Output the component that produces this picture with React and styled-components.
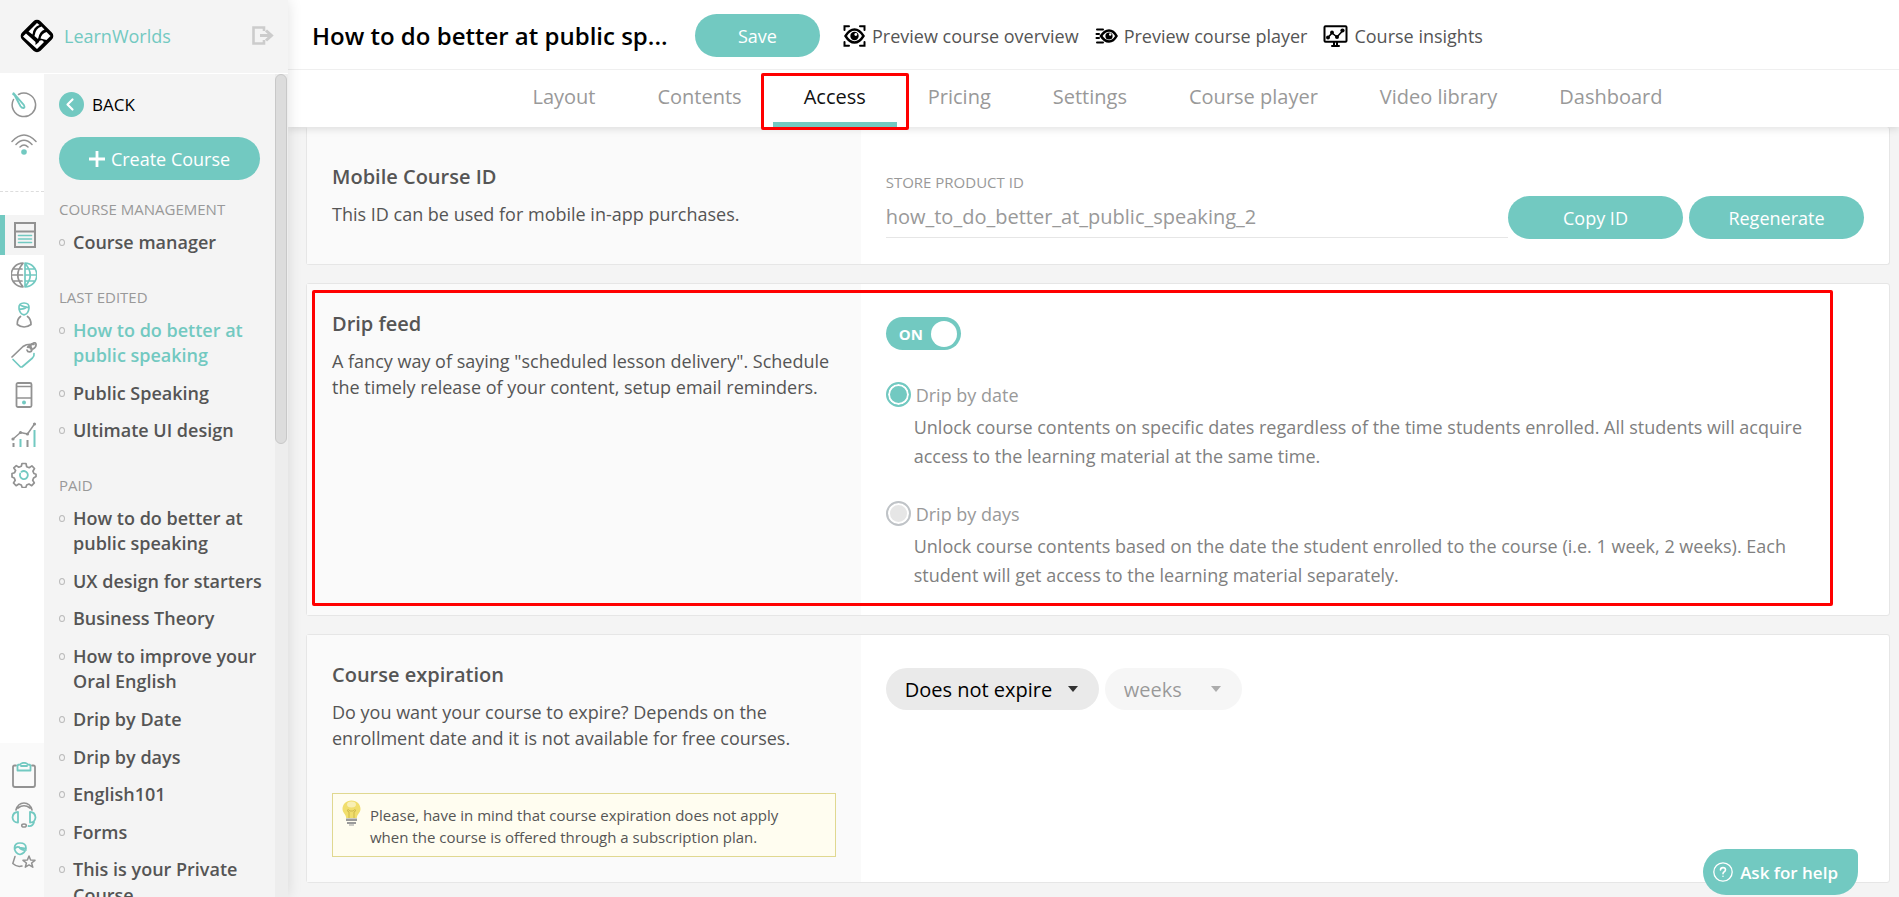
import React, { useState } from 'react';
import styled, { createGlobalStyle, ThemeProvider } from 'styled-components';

const theme = {
  colors: {
    teal: '#72c9c1',
    page: '#f4f4f4',
    panel: '#fafafa',
    border: '#e6e6e6',
    text: '#555555',
    muted: '#999999',
    icon: '#929292',
    mark: '#ff0000',
  },
  size: {
    note: '15px',
    body: '18px',
    tab: '20px',
    title: '24px',
  },
};

const GlobalStyle = createGlobalStyle`
  *, *::before, *::after {
    box-sizing: border-box;
  }

  body {
    margin: 0;
    font-family: 'Open Sans', 'Noto Sans', sans-serif;
    font-size: 18px;
    color: #555555;
  }

  h1, h2, h3, p, ul {
    margin: 0;
    padding: 0;
  }

  ul {
    list-style: none;
  }

  a {
    color: inherit;
    text-decoration: none;
  }

  button, input, select {
    font: inherit;
    color: inherit;
  }

  svg {
    display: block;
    flex: none;
  }
`;

const Shell = styled.div`
  display: flex;
  height: 100vh;
  overflow: hidden;
  background: ${({ theme }) => theme.colors.page};
`;

/* ---------- sidebar ---------- */

const Sidebar = styled.aside`
  display: flex;
  flex-direction: column;
  flex: none;
  width: 288px;
  z-index: 3;
  background: ${({ theme }) => theme.colors.page};
  box-shadow: 0 0 14px rgba(0, 0, 0, 0.12);
`;

const Brand = styled.div`
  display: flex;
  align-items: center;
  gap: 9px;
  height: 74px;
  flex: none;
  padding: 0 14px 2px 19px;
  border-bottom: 1px solid #ffffff;
`;

const BrandName = styled.a`
  flex: 1;
  color: ${({ theme }) => theme.colors.teal};
`;

const IconButton = styled.button`
  padding: 0;
  border: 0;
  background: none;
  cursor: pointer;
`;

const SidebarBody = styled.div`
  display: flex;
  flex: 1;
  min-height: 0;
`;

const Rail = styled.nav`
  display: flex;
  flex-direction: column;
  justify-content: space-between;
  width: 44px;
  flex: none;
  background: #ffffff;
`;

const RailGroup = styled.div`
  padding: 11px 0 26px;
  border-bottom: 1px dashed #dddddd;
`;

const RailMain = styled.div`
  padding-top: 23px;
`;

const RailFooter = styled.div`
  padding: 12px 0 22px;
  background: ${({ theme }) => theme.colors.panel};
`;

const RailLink = styled.a`
  display: flex;
  align-items: center;
  justify-content: center;
  height: 40px;
  padding-left: ${({ $active }) => ($active ? '0' : '4px')};
  border-left: ${({ $active, theme }) => ($active ? `5px solid ${theme.colors.teal}` : '0')};
  background: ${({ $active, theme }) => ($active ? theme.colors.page : 'transparent')};
`;

const CoursePanel = styled.div`
  flex: 1;
  min-width: 0;
  padding: 18px 6px 0 15px;
  overflow: hidden;
`;

const ScrollTrack = styled.div`
  width: 13px;
  flex: none;
  background: #ededed;
`;

const ScrollThumb = styled.div`
  width: 12px;
  height: 45%;
  border: 1px solid #c8c8c8;
  border-radius: 6px;
  background: #dcdcdc;
`;

const BackLink = styled.a`
  display: flex;
  align-items: center;
  gap: 8px;
  height: 25px;
  color: #000000;
  font-size: 17px;
  font-weight: 500;
`;

const PillButton = styled.button`
  display: flex;
  align-items: center;
  justify-content: center;
  gap: 6px;
  flex: none;
  width: ${({ $width }) => $width};
  height: 43px;
  padding: 0;
  border: 0;
  border-radius: 22px;
  background: ${({ theme }) => theme.colors.teal};
  color: #ffffff;
  cursor: pointer;
`;

const CreateWrap = styled.div`
  padding: 20px 0 18px;
`;

const GroupTitle = styled.h3`
  font-size: ${({ theme }) => theme.size.note};
  font-weight: 500;
  line-height: 22px;
  color: ${({ theme }) => theme.colors.muted};
  text-transform: uppercase;
`;

const CourseList = styled.ul`
  display: flex;
  flex-direction: column;
  gap: 12px;
  padding: 10px 0 30px;
`;

const CourseItem = styled.li`
  display: flex;
  gap: 8px;
  line-height: 1.42;
  font-weight: 600;
  color: ${({ $active, theme }) => ($active ? theme.colors.teal : theme.colors.text)};

  &::before {
    content: '';
    flex: none;
    width: 6px;
    height: 7px;
    margin-top: 9px;
    border: 1px solid #bbbbbb;
    border-radius: 50%;
  }
`;

/* ---------- main column ---------- */

const Main = styled.div`
  display: flex;
  flex-direction: column;
  flex: 1;
  min-width: 0;
`;

const TopArea = styled.header`
  flex: none;
  z-index: 2;
  background: #ffffff;
  box-shadow: 0 2px 8px rgba(0, 0, 0, 0.12);
`;

const TitleBar = styled.div`
  display: flex;
  align-items: center;
  height: 70px;
  padding: 2px 24px 0;
  border-bottom: 1px solid #efefef;
`;

const PageTitle = styled.h1`
  width: 383px;
  padding-right: 20px;
  overflow: hidden;
  font-size: ${({ theme }) => theme.size.title};
  font-weight: 600;
  line-height: 36px;
  white-space: nowrap;
  color: #000000;
`;

const HeaderLinks = styled.div`
  display: flex;
  gap: 16px;
  padding-left: 23px;
`;

const HeaderLink = styled.a`
  display: flex;
  align-items: center;
  gap: 6px;
  white-space: nowrap;
`;

const Tabs = styled.nav`
  display: flex;
  justify-content: center;
  height: 57px;
  padding-left: 8px;
`;

const Tab = styled.a`
  position: relative;
  padding: 13px 31px 0;
  border-bottom: 5px solid ${({ $active, theme }) => ($active ? theme.colors.teal : 'transparent')};
  font-size: ${({ theme }) => theme.size.tab};
  line-height: 28px;
  white-space: nowrap;
  color: ${({ $active, theme }) => ($active ? '#111111' : theme.colors.muted)};
`;

/* Red callout frames laid over the parts being explained */
const Callout = styled.span`
  position: absolute;
  inset: ${({ $inset }) => $inset};
  border: 3px solid ${({ theme }) => theme.colors.mark};
  border-radius: 2px;
  pointer-events: none;
`;

const Content = styled.main`
  display: flex;
  flex-direction: column;
  gap: 18px;
  flex: 1;
  min-height: 0;
  padding: 0 9px 0 18px;
  overflow: hidden;
`;

const Card = styled.section`
  position: relative;
  display: grid;
  grid-template-columns: 35% 65%;
  flex: none;
  border: 1px solid ${({ theme }) => theme.colors.border};
  border-top-width: ${({ $continued }) => ($continued ? '0' : '1px')};
  border-radius: 3px;
  background: #ffffff;
`;

const CardInfo = styled.div`
  padding: ${({ $continued }) => ($continued ? '36px' : '26px')} 25px 25px;
  background: ${({ theme }) => theme.colors.panel};
`;

const CardFields = styled.div`
  padding: 33px 25px 25px;
`;

const CardTitle = styled.h2`
  font-size: ${({ theme }) => theme.size.tab};
  font-weight: 600;
  line-height: 28px;
`;

const CardText = styled.p`
  padding-top: 10px;
  line-height: 26px;
`;

const IdLabel = styled.label`
  display: block;
  padding-top: 11px;
  font-size: ${({ theme }) => theme.size.note};
  font-weight: 500;
  line-height: 22px;
  color: ${({ theme }) => theme.colors.muted};
`;

const IdRow = styled.div`
  display: flex;
  gap: 6px;
  padding-top: 3px;
`;

const IdInput = styled.input`
  flex: 1;
  min-width: 0;
  height: 42px;
  margin-right: -6px;
  padding: 0;
  border: 0;
  border-bottom: 1px solid ${({ theme }) => theme.colors.border};
  outline: 0;
  background: none;
  font-size: ${({ theme }) => theme.size.tab};
  color: ${({ theme }) => theme.colors.muted};
`;

const Toggle = styled.label`
  position: relative;
  display: flex;
  align-items: center;
  justify-content: space-between;
  flex-direction: ${({ $on }) => ($on ? 'row' : 'row-reverse')};
  width: 75px;
  height: 33px;
  padding: 0 4px 0 13px;
  border-radius: 17px;
  background: ${({ $on, theme }) => ($on ? theme.colors.teal : '#cccccc')};
  color: #ffffff;
  font-size: ${({ theme }) => theme.size.note};
  font-weight: 700;
  cursor: pointer;

  input {
    position: absolute;
    inset: 0;
    width: 100%;
    height: 100%;
    margin: 0;
    opacity: 0;
  }
`;

const Knob = styled.span`
  width: 26px;
  height: 26px;
  border-radius: 50%;
  background: #ffffff;
`;

const Options = styled.div`
  display: flex;
  flex-direction: column;
  gap: 28px;
  padding-top: 30px;
`;

const OptionLabel = styled.label`
  display: flex;
  align-items: center;
  gap: 5px;
  height: 29px;
  color: ${({ theme }) => theme.colors.muted};
`;

const Radio = styled.input`
  appearance: none;
  flex: none;
  width: 25px;
  height: 25px;
  margin: 0;
  border: 2px solid #bfc3c7;
  border-radius: 50%;
  background: #e6e6e6;
  box-shadow: inset 0 0 0 2px #ffffff;

  &:checked {
    border-color: ${({ theme }) => theme.colors.teal};
    background: ${({ theme }) => theme.colors.teal};
  }
`;

const OptionText = styled.p`
  max-width: 930px;
  padding: 4px 0 0 28px;
  line-height: 29px;
  color: #808080;
`;

const SelectRow = styled.div`
  display: flex;
  gap: 6px;
`;

const SelectBox = styled.div`
  display: flex;
  align-items: center;
  position: relative;
  opacity: ${({ $disabled }) => ($disabled ? 0.4 : 1)};

  svg {
    position: absolute;
    right: 21px;
    pointer-events: none;
  }
`;

const Select = styled.select`
  appearance: none;
  width: ${({ $width }) => $width};
  height: 42px;
  padding: 0 40px 0 19px;
  border: 0;
  border-radius: 21px;
  background: #eaeaea;
  font-size: ${({ theme }) => theme.size.tab};
  color: #000000;
  opacity: 1;
`;

const Note = styled.div`
  display: flex;
  gap: 9px;
  margin-top: 42px;
  padding: 6px 30px 8px 9px;
  border: 1px solid #e0d890;
  background: #fffdf0;
`;

const NoteText = styled.p`
  padding-top: 4px;
  font-size: ${({ theme }) => theme.size.note};
  line-height: 22px;
`;

const HelpButton = styled.button`
  position: fixed;
  right: 41px;
  bottom: 2px;
  z-index: 4;
  display: flex;
  align-items: center;
  gap: 7px;
  height: 46px;
  padding: 0 20px 0 10px;
  border: 0;
  border-radius: 23px 6px 23px 23px;
  background: ${({ theme }) => theme.colors.teal};
  color: #ffffff;
  font-size: 17px;
  font-weight: 600;
  cursor: pointer;
`;

/* ---------- icons ---------- */

const G = theme.colors.icon;
const T = theme.colors.teal;

const RailIcon = ({ children }) => (
  <svg width="26" height="26" viewBox="0 0 26 26" fill="none" strokeWidth="1.5" strokeLinecap="round" strokeLinejoin="round">
    {children}
  </svg>
);

const railIcons = {
  dashboard: (
    <RailIcon>
      <path stroke={G} d="M7.500 2.500A11.700 11.700 0 1 1 2.500 7.500" />
      <path stroke={T} d="M2.500 1.200L12.800 12.800Q14.200 15.500 12.800 16Q10.800 16.200 9.500 14.200ZM2 2L4.500 4" strokeWidth="1.800" />
    </RailIcon>
  ),
  signal: (
    <RailIcon>
      <path stroke={G} d="M1 9.500Q13-3.500 25 9.500M5 12.500Q13 4 21 12.500M9 15Q13 11 17 15" />
      <circle cx="13" cy="20" r="2.800" fill={T} />
    </RailIcon>
  ),
  courses: (
    <RailIcon>
      <path stroke={G} strokeWidth="2" strokeLinejoin="miter" d="M3 1h20v24H3zM3 9.500h20" />
      <path stroke={T} strokeWidth="1.600" d="M6.500 13.500h13M6.500 17h13M6.500 20.500h13" />
    </RailIcon>
  ),
  site: (
    <RailIcon>
      <path stroke={G} d="M12 1.200A11.800 11.800 0 0 0 12 24.800M11.500 2Q2 13 11.500 24M3 7h8M1.500 13h10M3 19h8" strokeWidth="1.700" />
      <path stroke={T} d="M14 1.200A11.800 11.800 0 0 1 14 24.800M14 1.500v23M14.500 2Q24 13 14.500 24M14 7h9M14 13h11M14 19h9" strokeWidth="1.700" />
    </RailIcon>
  ),
  users: (
    <RailIcon>
      <path stroke={T} strokeWidth="1.700" d="M8 6Q7.500 1 13 1Q18.500 1 18 6Q17.500 12 13 12.800Q8.500 12 8 6ZM8 7Q14 7.500 15.500 5L18 6M10 3.500Q13 5 15.500 5" />
      <path stroke={G} d="M9.500 14.500Q6 17 6.300 22.500Q13 27.500 20 22.500Q20 17 16.500 14.500" strokeWidth="1.700" />
    </RailIcon>
  ),
  sales: (
    <RailIcon>
      <path stroke={G} strokeWidth="1.700" d="M1 15L12 4.500Q16 1.500 23 2.500M16 8a2.500 2.500 0 1 0 3-3Q14 6 19 3.500Q24-1 25 2Q25.500 5 22 7Q18 8 20 4" />
      <path stroke={T} strokeWidth="1.700" d="M2 17.500L9.500 25H11L21.500 16Q23.500 14 23 11.500" />
    </RailIcon>
  ),
  mobile: (
    <RailIcon>
      <rect x="5.500" y="1" width="15" height="24" rx="1.500" stroke={G} strokeWidth="1.800" />
      <path stroke={G} d="M6 4.500h14M6 16h14" />
      <circle cx="13" cy="20.500" r="2" fill={T} />
    </RailIcon>
  ),
  reports: (
    <RailIcon>
      <path stroke={G} d="M2 17L9.500 10.500L16.500 12L23.500 2" />
      <g fill={G}>
        <circle cx="2" cy="17" r="1.600" />
        <circle cx="9.500" cy="10.500" r="1.600" />
        <circle cx="16.500" cy="12" r="1.600" />
        <circle cx="23.500" cy="2" r="1.600" />
      </g>
      <path stroke={G} strokeLinecap="butt" strokeWidth="2" d="M2.500 21v4M16.500 18v7" />
      <path stroke={T} strokeLinecap="butt" strokeWidth="2" d="M9.500 17v8M23.500 8v17" />
    </RailIcon>
  ),
  settings: (
    <RailIcon>
      <path
        stroke={G}
        strokeWidth="1.700"
        d="M11 1.500h4l.7 3.200 2.500 1 2.700-1.800 2.600 2.600-1.600 2.700 1 2.300 2.100.7v2.400l-2.400 1.400-.9 2.300 1.600 2.600-2.600 2.800-2.700-1.700-2.300 1-.9 2.500h-3.600l-.9-2.500-2.500-1-2.700 1.700-2.600-2.700 1.700-2.700-1-2.400-2.200-1V11.500l2.600-.8 1-2.300-1.800-2.500 2.500-2.300 2.500 1.600 2.500-.9z"
      />
      <path stroke={T} strokeWidth="1.800" d="M12 9.200A4 4 0 1 1 9.200 11.500M14 9.200A4 4 0 0 0 10.500 9.800" />
    </RailIcon>
  ),
  tasks: (
    <RailIcon>
      <path stroke={G} strokeWidth="1.800" d="M5 3.500H3.500Q2 3.500 2 5V23Q2 25 4 25H22Q24 25 24 23V5Q24 3.500 22.500 3.500H21" />
      <path stroke={T} strokeWidth="1.800" d="M6.500 3.500V8.500H19.500V3.500Q19 2.500 17 2.500Q15.500 .8 13 .8Q10.500 .8 9 2.500Q7 2.500 6.500 3.500ZM10 4h6" />
    </RailIcon>
  ),
  support: (
    <RailIcon>
      <path stroke={G} d="M5 8Q7 1 13 1Q19 1 21 8M7 6Q13 1.500 19 6" strokeWidth="1.700" />
      <path stroke={T} strokeWidth="1.800" d="M7 10Q2 10 1.500 15.500Q2 20.500 7 20.500ZM19 10Q24 10 24.500 15.500Q24 20.500 19 20.500ZM23 20Q22 24.500 17.500 24" />
      <ellipse cx="13" cy="23.500" rx="2.300" ry="1.600" stroke={G} />
    </RailIcon>
  ),
  community: (
    <RailIcon>
      <path stroke={T} strokeWidth="1.700" d="M3.500 6Q3.500 1 9 1Q15 1 15 6Q14 11.500 9 12.500Q4 11.500 3.500 6ZM3.500 7Q6 4 8.500 5.500L15 6.500M8 5Q10 8.500 15 8" />
      <path stroke={G} d="M4 14.500L1.800 21.500Q6 25.500 11 24M18 14l1.600 4 4.400.3-3.400 2.700 1.200 4.200-3.800-2.300-3.700 2.300 1.100-4.200-3.400-2.700 4.400-.3z" />
    </RailIcon>
  ),
};

const Logo = () => (
  <svg width="36" height="36" viewBox="0 0 36 36" aria-hidden="true">
    <rect x="5" y="5" width="26" height="26" rx="5" transform="rotate(45 18 18)" fill="#000000" />
    <g fill="#ffffff">
      <path d="M4 18.500L7 15.500L16.500 24V27L19.500 24.500Q20.500 21.500 23.500 22.500L25 24L18 31Z" />
      <path d="M9.500 13.500L18 5L20.500 7Q14.500 8.500 13.500 16.500Z" />
      <path d="M15.500 18Q16.500 10 22.500 8.500L25.500 11.500Q20.500 13 19 21Z" />
      <path d="M21.500 20.500Q22.500 15.500 27.500 14L31.500 18L27.500 22Z" />
    </g>
  </svg>
);

const LogoutIcon = () => (
  <svg width="22" height="19" viewBox="0 0 22 19" fill="none" stroke="#cccccc" aria-hidden="true">
    <path strokeWidth="2.600" d="M12 5V1.500H1.500V17.500H12V14" />
    <path strokeWidth="3" d="M8 9.500H19M14 4.500L19.500 9.500L14 14.500" />
  </svg>
);

const BackIcon = () => (
  <svg width="25" height="25" viewBox="0 0 25 25" fill="none" aria-hidden="true">
    <circle cx="12.500" cy="12.500" r="12.500" fill={T} />
    <path stroke="#ffffff" strokeWidth="2.200" strokeLinecap="round" strokeLinejoin="round" d="M13.500 7.500L8.500 12.500L13.500 17.500" />
  </svg>
);

const PlusIcon = () => (
  <svg width="16" height="16" viewBox="0 0 16 16" stroke="#ffffff" strokeWidth="2.800" aria-hidden="true">
    <path d="M8 0V16M0 8H16" />
  </svg>
);

const OverviewIcon = () => (
  <svg width="23" height="22" viewBox="0 0 23 22" fill="none" stroke="#000000" strokeWidth="2" strokeLinecap="round" aria-hidden="true">
    <path d="M1.500 5V1.200H6M17 1.200H21.500V5M21.500 17V20.800H17M6 20.800H1.500V17" />
    <path strokeWidth="2.400" d="M2.500 11Q6.500 4.500 11.500 4.500Q16.500 4.500 20.500 11Q16.500 17.500 11.500 17.500Q6.500 17.500 2.500 11Z" />
    <circle cx="11.500" cy="11" r="4.200" fill="#000000" stroke="none" />
    <circle cx="12.800" cy="9.500" r="1.400" fill="#ffffff" stroke="none" />
  </svg>
);

const PlayerIcon = () => (
  <svg width="23" height="22" viewBox="0 0 23 22" fill="none" stroke="#000000" strokeWidth="2" strokeLinecap="round" aria-hidden="true">
    <path d="M2 4.500H8M1.500 9H4M1.500 13H4M2 17.500H8" />
    <path strokeWidth="2.600" d="M6 11Q9.500 5.500 14 5.500Q18.500 5.500 21.500 11Q18.500 16.500 14 16.500Q9.500 16.500 6 11Z" />
    <circle cx="14" cy="11" r="3.600" fill="#000000" stroke="none" />
    <circle cx="15.200" cy="9.500" r="1.200" fill="#ffffff" stroke="none" />
  </svg>
);

const InsightsIcon = () => (
  <svg width="25" height="22" viewBox="0 0 25 22" fill="none" stroke="#000000" strokeWidth="2" strokeLinecap="round" aria-hidden="true">
    <rect x="1.500" y="1.200" width="22" height="15.500" rx="1" />
    <path d="M9 21H16M11 17.500V20.500M14 17.500V20.500" />
    <path strokeWidth="1.600" d="M5 12.500L9 8L14 12L19.500 6" />
    <g fill="#000000" stroke="none">
      <circle cx="5" cy="12.500" r="2" />
      <circle cx="9" cy="7.500" r="1.900" />
      <circle cx="14" cy="12" r="2" />
      <circle cx="19.500" cy="5.500" r="2.100" />
    </g>
  </svg>
);

const CaretIcon = () => (
  <svg width="10" height="6" viewBox="0 0 10 6" aria-hidden="true">
    <path d="M0 0H10L5 6Z" fill="#333333" />
  </svg>
);

const BulbIcon = () => (
  <svg width="19" height="26" viewBox="0 0 19 26" aria-hidden="true">
    <path fill="#f1de6c" d="M9.500.5C4 .5.500 4.300.500 9c0 4 3.500 5 3.700 9h10.600c.2-4 3.700-5 3.700-9C18.500 4.300 15 .5 9.500.5z" />
    <ellipse cx="9.500" cy="4.500" rx="4.500" ry="3" fill="#f8efb4" />
    <path fill="none" stroke="#cdb84a" d="M7 18V12L5 10.500Q6 8.500 8 11H11Q13 8.500 14 10.500L12 12V18" />
    <path fill="#9a9a9a" d="M4 18.500h11V21H4zM5 22h9v2H5zM7 24.500h5v1H7z" />
  </svg>
);

const HelpIcon = () => (
  <svg width="20" height="20" viewBox="0 0 20 20" fill="none" stroke="#ffffff" strokeLinecap="round" aria-hidden="true">
    <circle cx="10" cy="10" r="9.200" strokeWidth="1.300" />
    <path strokeWidth="1.600" d="M7.500 8Q7.500 5.600 10 5.600Q12.500 5.600 12.500 7.800Q12.500 9 11.200 9.800Q10 10.500 10 11.800M10 14.200V14.300" />
  </svg>
);

/* ---------- data ---------- */

const courseGroups = [
  { title: 'Course management', items: ['Course manager'] },
  {
    title: 'Last edited',
    active: 'How to do better at public speaking',
    items: ['How to do better at public speaking', 'Public Speaking', 'Ultimate UI design'],
  },
  {
    title: 'Paid',
    items: [
      'How to do better at public speaking',
      'UX design for starters',
      'Business Theory',
      'How to improve your Oral English',
      'Drip by Date',
      'Drip by days',
      'English101',
      'Forms',
      'This is your Private Course',
    ],
  },
];

const tabs = ['Layout', 'Contents', 'Access', 'Pricing', 'Settings', 'Course player', 'Video library', 'Dashboard'];

const dripOptions = [
  {
    id: 'date',
    label: 'Drip by date',
    text: 'Unlock course contents on specific dates regardless of the time students enrolled. All students will acquire access to the learning material at the same time.',
  },
  {
    id: 'days',
    label: 'Drip by days',
    text: 'Unlock course contents based on the date the student enrolled to the course (i.e. 1 week, 2 weeks). Each student will get access to the learning material separately.',
  },
];

const RailItem = ({ name, active }) => (
  <RailLink href="#" $active={active} aria-label={name}>
    {railIcons[name]}
  </RailLink>
);

const SideNav = () => (
  <Sidebar>
    <Brand>
      <Logo />
      <BrandName href="#">LearnWorlds</BrandName>
      <IconButton aria-label="Log out">
        <LogoutIcon />
      </IconButton>
    </Brand>
    <SidebarBody>
      <Rail>
        <div>
          <RailGroup>
            <RailItem name="dashboard" />
            <RailItem name="signal" />
          </RailGroup>
          <RailMain>
            <RailItem name="courses" active />
            {['site', 'users', 'sales', 'mobile', 'reports', 'settings'].map((name) => (
              <RailItem key={name} name={name} />
            ))}
          </RailMain>
        </div>
        <RailFooter>
          <RailItem name="tasks" />
          <RailItem name="support" />
          <RailItem name="community" />
        </RailFooter>
      </Rail>
      <CoursePanel>
        <BackLink href="#">
          <BackIcon />
          BACK
        </BackLink>
        <CreateWrap>
          <PillButton $width="201px">
            <PlusIcon />
            Create Course
          </PillButton>
        </CreateWrap>
        {courseGroups.map((group) => (
          <React.Fragment key={group.title}>
            <GroupTitle>{group.title}</GroupTitle>
            <CourseList>
              {group.items.map((item) => (
                <CourseItem key={item} $active={item === group.active}>
                  <a href="#">{item}</a>
                </CourseItem>
              ))}
            </CourseList>
          </React.Fragment>
        ))}
      </CoursePanel>
      <ScrollTrack>
        <ScrollThumb />
      </ScrollTrack>
    </SidebarBody>
  </Sidebar>
);

const App = () => {
  const [dripOn, setDripOn] = useState(true);
  const [dripMode, setDripMode] = useState('date');

  return (
    <ThemeProvider theme={theme}>
      <GlobalStyle />
      <Shell>
        <SideNav />
        <Main>
          <TopArea>
            <TitleBar>
              <PageTitle>How to do better at public sp...</PageTitle>
              <PillButton $width="125px">Save</PillButton>
              <HeaderLinks>
                <HeaderLink href="#">
                  <OverviewIcon />
                  Preview course overview
                </HeaderLink>
                <HeaderLink href="#">
                  <PlayerIcon />
                  Preview course player
                </HeaderLink>
                <HeaderLink href="#">
                  <InsightsIcon />
                  Course insights
                </HeaderLink>
              </HeaderLinks>
            </TitleBar>
            <Tabs>
              {tabs.map((tab) => (
                <Tab key={tab} href="#" $active={tab === 'Access'}>
                  {tab}
                  {tab === 'Access' && <Callout $inset="3px -12px -8px -12px" />}
                </Tab>
              ))}
            </Tabs>
          </TopArea>

          <Content>
            <Card $continued>
              <CardInfo $continued>
                <CardTitle>Mobile Course ID</CardTitle>
                <CardText>This ID can be used for mobile in-app purchases.</CardText>
              </CardInfo>
              <CardFields>
                <IdLabel htmlFor="product-id">STORE PRODUCT ID</IdLabel>
                <IdRow>
                  <IdInput id="product-id" readOnly value="how_to_do_better_at_public_speaking_2" />
                  <PillButton $width="175px">Copy ID</PillButton>
                  <PillButton $width="175px">Regenerate</PillButton>
                </IdRow>
              </CardFields>
            </Card>

            <Card>
              <CardInfo>
                <CardTitle>Drip feed</CardTitle>
                <CardText>
                  A fancy way of saying "scheduled lesson delivery". Schedule the timely release of your content, setup
                  email reminders.
                </CardText>
              </CardInfo>
              <CardFields>
                <Toggle $on={dripOn}>
                  <input
                    type="checkbox"
                    role="switch"
                    aria-label="Drip feed"
                    checked={dripOn}
                    onChange={() => setDripOn(!dripOn)}
                  />
                  {dripOn ? 'ON' : 'OFF'}
                  <Knob />
                </Toggle>
                <Options>
                  {dripOptions.map((option) => (
                    <div key={option.id}>
                      <OptionLabel>
                        <Radio
                          type="radio"
                          name="drip"
                          checked={dripMode === option.id}
                          onChange={() => setDripMode(option.id)}
                        />
                        {option.label}
                      </OptionLabel>
                      <OptionText>{option.text}</OptionText>
                    </div>
                  ))}
                </Options>
              </CardFields>
              <Callout $inset="6px 56px 9px 5px" />
            </Card>

            <Card>
              <CardInfo>
                <CardTitle>Course expiration</CardTitle>
                <CardText>
                  Do you want your course to expire? Depends on the enrollment date and it is not available for free
                  courses.
                </CardText>
                <Note>
                  <BulbIcon />
                  <NoteText>
                    Please, have in mind that course expiration does not apply when the course is offered through a
                    subscription plan.
                  </NoteText>
                </Note>
              </CardInfo>
              <CardFields>
                <SelectRow>
                  <SelectBox>
                    <Select $width="213px" aria-label="Course expiration">
                      <option>Does not expire</option>
                      <option>Expires after</option>
                    </Select>
                    <CaretIcon />
                  </SelectBox>
                  <SelectBox $disabled>
                    <Select $width="137px" aria-label="Expiration unit" disabled>
                      <option>weeks</option>
                      <option>days</option>
                    </Select>
                    <CaretIcon />
                  </SelectBox>
                </SelectRow>
              </CardFields>
            </Card>
          </Content>
        </Main>
        <HelpButton>
          <HelpIcon />
          Ask for help
        </HelpButton>
      </Shell>
    </ThemeProvider>
  );
};

export default App;
